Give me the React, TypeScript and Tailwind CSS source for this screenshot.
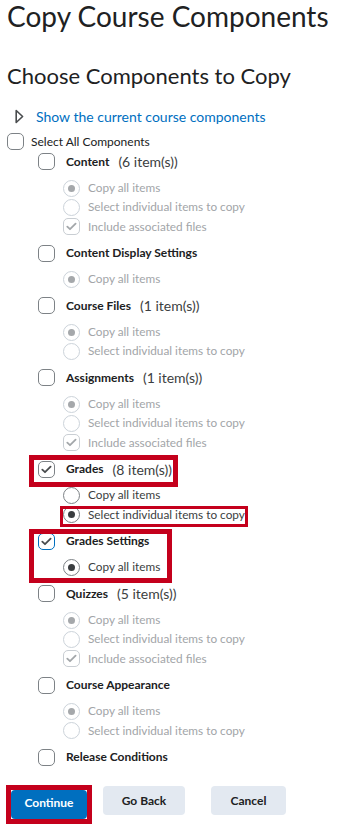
import React from "react";

type Sub = { label: string; kind: "radio" | "check"; on: boolean };
type Comp = {
  name: string;
  count?: string;
  checked?: boolean;
  focus?: boolean;
  live?: boolean;
  subs: Sub[];
};

const copyAll = (on: boolean): Sub => ({ label: "Copy all items", kind: "radio", on });
const pick = (on: boolean): Sub => ({ label: "Select individual items to copy", kind: "radio", on });
const files: Sub = { label: "Include associated files", kind: "check", on: true };

const COMPONENTS: Comp[] = [
  { name: "Content", count: "(6 item(s))", subs: [copyAll(true), pick(false), files] },
  { name: "Content Display Settings", subs: [copyAll(true)] },
  { name: "Course Files", count: "(1 item(s))", subs: [copyAll(true), pick(false)] },
  { name: "Assignments", count: "(1 item(s))", subs: [copyAll(true), pick(false), files] },
  { name: "Grades", count: "(8 item(s))", checked: true, live: true, subs: [copyAll(false), pick(true)] },
  { name: "Grades Settings", checked: true, focus: true, live: true, subs: [copyAll(true)] },
  { name: "Quizzes", count: "(5 item(s))", subs: [copyAll(true), pick(false), files] },
  { name: "Course Appearance", subs: [copyAll(true), pick(false)] },
  { name: "Release Conditions", subs: [] },
];

function Check({ on, focus, disabled }: { on?: boolean; focus?: boolean; disabled?: boolean }) {
  const border = focus ? "border-[#006fbf]" : disabled ? "border-[#c9ced3]" : "border-[#7d8286]";
  return (
    <span
      className={`flex h-[17px] w-[17px] shrink-0 items-center justify-center rounded-[5px] border bg-white ${border}`}
    >
      {on && (
        <svg width="11" height="9" viewBox="0 0 11 9" fill="none">
          <path
            d="M1.3 4.6 L4 7.2 L9.6 1.6"
            stroke={disabled ? "#a3a7aa" : "#494c4e"}
            strokeWidth="1.8"
            strokeLinecap="round"
            strokeLinejoin="round"
          />
        </svg>
      )}
    </span>
  );
}

function Radio({ on, disabled }: { on: boolean; disabled: boolean }) {
  return (
    <span
      className={`flex h-[17px] w-[17px] shrink-0 items-center justify-center rounded-full border bg-white ${
        disabled ? "border-[#ccd3da]" : "border-[#7d8286]"
      }`}
    >
      {on && (
        <span
          className={`h-[7px] w-[7px] rounded-full ${disabled ? "bg-[#a5a8ab]" : "bg-[#3a3d40]"}`}
        />
      )}
    </span>
  );
}

function Block({ c }: { c: Comp }) {
  const disabled = !c.live;
  return (
    <div className="pb-[7px]">
      <div className="flex h-[20px] items-center pl-[31px]">
        <Check on={c.checked} focus={c.focus} />
        <span className="ml-[11px] text-[12px] font-bold text-[#202122]">{c.name}</span>
        {c.count && <span className="ml-[9px] text-[14px] text-[#3b3e41]">{c.count}</span>}
      </div>
      {c.subs.length > 0 && (
        <div className="mt-[6.65px]">
          {c.subs.map((s) => (
            <div key={s.label} className="flex h-[19.2px] items-center pl-[56px]">
              {s.kind === "radio" ? (
                <Radio on={s.on} disabled={disabled} />
              ) : (
                <Check on disabled />
              )}
              <span
                className={`ml-[8px] text-[11.8px] ${disabled ? "text-[#a2a5a8]" : "text-[#3b3e41]"}`}
              >
                {s.label}
              </span>
            </div>
          ))}
        </div>
      )}
    </div>
  );
}

export default function App() {
  return (
    <div className="relative min-h-[829px] w-[345px] overflow-hidden bg-white pl-[7px] font-['Lato',sans-serif] text-[#202122]">
      <h1 className="text-[28px] leading-[32px] font-normal whitespace-nowrap">Copy Course Components</h1>
      <h2 className="mt-[31.8px] text-[22px] leading-[24px] font-normal">Choose Components to Copy</h2>

      <div className="mt-[19px] flex h-[20px] items-center pl-[8px]">
        <svg width="9" height="15" viewBox="0 0 9 15" fill="none">
          <path d="M1.2 1.5 L7.6 7.5 L1.2 13.5 Z" stroke="#494c4e" strokeWidth="1.6" strokeLinejoin="round" />
        </svg>
        <span className="ml-[12px] text-[14px] text-[#006fbf]">Show the current course components</span>
      </div>

      <div className="mt-[5px] flex h-[20px] items-center">
        <Check />
        <span className="ml-[7px] text-[12px] text-[#202122]">Select All Components</span>
      </div>

      {COMPONENTS.map((c) => (
        <Block key={c.name} c={c} />
      ))}

      <div className="mt-[12px] flex items-start">
        <button
          type="button"
          className="mt-[4px] ml-[4px] h-[29px] w-[76px] rounded-[4px] bg-[#006fbf] pb-[4px] text-[12px] font-bold text-white"
        >
          Continue
        </button>
        <button
          type="button"
          className="ml-[16px] h-[29px] w-[82px] rounded-[4px] bg-[#e3e9f1] text-[12px] font-bold text-[#202122]"
        >
          Go Back
        </button>
        <button
          type="button"
          className="ml-[26px] h-[29px] w-[75px] rounded-[4px] bg-[#e3e9f1] text-[12px] font-bold text-[#202122]"
        >
          Cancel
        </button>
      </div>

      {/* red annotation boxes */}
      <div className="pointer-events-none absolute top-[455px] left-[29px] h-[32px] w-[149px] border-[5px] border-[#c4001c]" />
      <div className="pointer-events-none absolute top-[506px] left-[60px] h-[21px] w-[188px] border-[3px] border-[#c4001c]" />
      <div className="pointer-events-none absolute top-[529px] left-[29px] h-[54px] w-[143px] border-[5px] border-[#c4001c]" />
      <div className="pointer-events-none absolute top-[785px] left-[6px] h-[39px] w-[86px] border-[5px] border-[#c4001c]" />
    </div>
  );
}
